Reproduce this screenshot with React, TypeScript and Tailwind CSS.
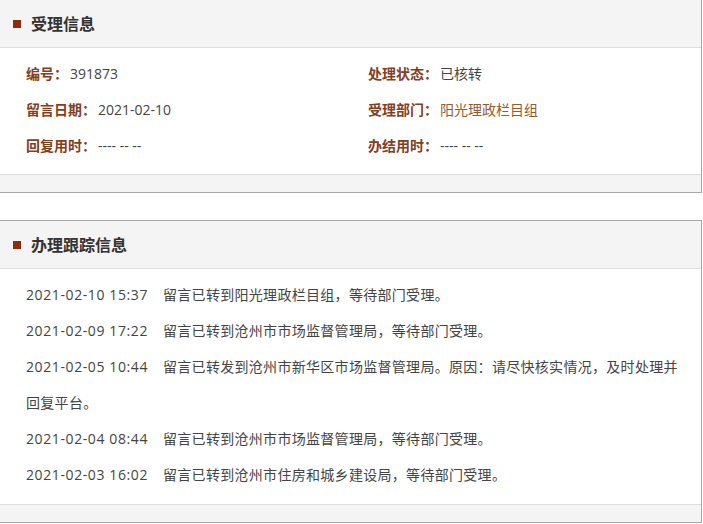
const info = [
  [
    { label: "编号", value: "391873", tone: "plain" },
    { label: "处理状态", value: "已核转", tone: "plain" },
  ],
  [
    { label: "留言日期", value: "2021-02-10", tone: "plain" },
    { label: "受理部门", value: "阳光理政栏目组", tone: "link" },
  ],
  [
    { label: "回复用时", value: "---- -- --", tone: "plain" },
    { label: "办结用时", value: "---- -- --", tone: "plain" },
  ],
];

const trace = [
  ["2021-02-10 15:37", "留言已转到阳光理政栏目组，等待部门受理。"],
  ["2021-02-09 17:22", "留言已转到沧州市市场监督管理局，等待部门受理。"],
  [
    "2021-02-05 10:44",
    "留言已转发到沧州市新华区市场监督管理局。原因：请尽快核实情况，及时处理并回复平台。",
  ],
  ["2021-02-04 08:44", "留言已转到沧州市市场监督管理局，等待部门受理。"],
  ["2021-02-03 16:02", "留言已转到沧州市住房和城乡建设局，等待部门受理。"],
];

function PanelHeader({ title }: { title: string }) {
  return (
    <div className="flex h-[48px] items-center border-b border-[#dcdcdc] bg-[#f4f4f4] pl-[13px]">
      <span className="mr-[10px] size-[8px] bg-[#8b2d0e]" />
      <h2 className="text-[16px] font-bold text-[#333]">{title}</h2>
    </div>
  );
}

function PanelFoot() {
  return <div className="h-[18px] border-t border-[#dcdcdc] bg-[#f4f4f4]" />;
}

export default function App() {
  return (
    <div className="min-h-[524px] w-[703px] bg-white font-['Open_Sans','Noto_Sans_CJK_SC',sans-serif] text-[14px] text-[#444]">
      <section className="w-[702px] border-r border-b border-[#a8a8a8]">
        <PanelHeader title="受理信息" />
        <div className="pt-[8px] pb-[10px] pl-[26px]">
          {info.map((row, i) => (
            <div key={i} className="grid grid-cols-[342px_1fr] leading-[36px]">
              {row.map((cell) => (
                <p key={cell.label}>
                  <span className="font-bold text-[#83401f]">
                    {cell.label}
                    <span className="mr-[2px]">：</span>
                  </span>
                  <span
                    className={
                      cell.tone === "link" ? "text-[#9a5a30]" : "text-[#444]"
                    }
                  >
                    {cell.value}
                  </span>
                </p>
              ))}
            </div>
          ))}
        </div>
        <PanelFoot />
      </section>

      <section className="mt-[27px] w-[702px] border-y border-r border-[#a8a8a8]">
        <PanelHeader title="办理跟踪信息" />
        <div className="pt-[8px] pr-[14px] pb-[11px] pl-[26px]">
          {trace.map(([time, msg]) => (
            <p key={time} className="leading-[36px] tracking-[0.3px]">
              <span className="mr-[15px] tracking-[0.6px]">{time}</span>
              {msg}
            </p>
          ))}
        </div>
        <PanelFoot />
      </section>
    </div>
  );
}
